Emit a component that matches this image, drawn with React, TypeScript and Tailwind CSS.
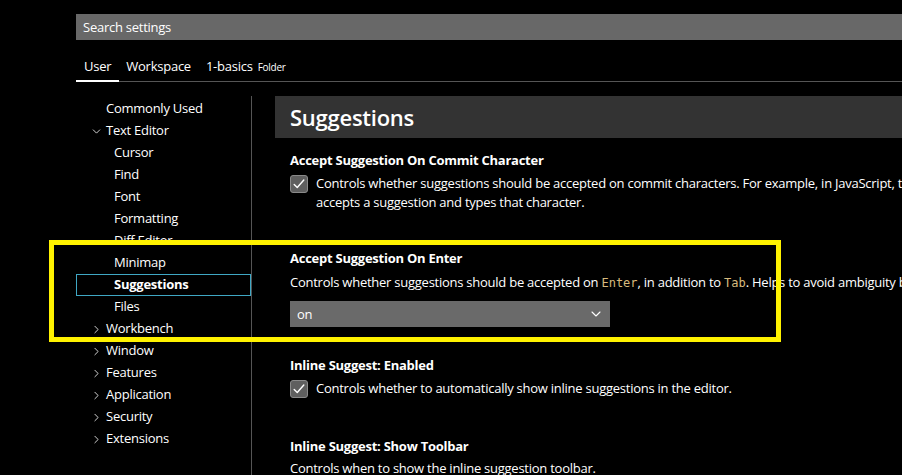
import { ChevronDown, ChevronRight } from "lucide-react";

const font = { fontFamily: '"Open Sans", "Noto Sans", sans-serif', letterSpacing: "-0.25px" };

type NavItem = { label: string; level: 0 | 1; chevron?: "down" | "right"; selected?: boolean };

const nav: NavItem[] = [
  { label: "Commonly Used", level: 0 },
  { label: "Text Editor", level: 0, chevron: "down" },
  { label: "Cursor", level: 1 },
  { label: "Find", level: 1 },
  { label: "Font", level: 1 },
  { label: "Formatting", level: 1 },
  { label: "Diff Editor", level: 1 },
  { label: "Minimap", level: 1 },
  { label: "Suggestions", level: 1, selected: true },
  { label: "Files", level: 1 },
  { label: "Workbench", level: 0, chevron: "right" },
  { label: "Window", level: 0, chevron: "right" },
  { label: "Features", level: 0, chevron: "right" },
  { label: "Application", level: 0, chevron: "right" },
  { label: "Security", level: 0, chevron: "right" },
  { label: "Extensions", level: 0, chevron: "right" },
];

function Checkbox() {
  return (
    <div className="mt-[1px] flex h-[18px] w-[18px] shrink-0 items-center justify-center rounded-[3px] border border-[#8a8a8a] bg-[#5f5f5f]">
      <svg width="14" height="14" viewBox="0 0 16 16" fill="none">
        <path d="M2.5 8.5l3.5 3.5 7.5-8.5" stroke="#fff" strokeWidth="1.6" strokeLinecap="round" strokeLinejoin="round" />
      </svg>
    </div>
  );
}

function Code({ children }: { children: string }) {
  return (
    <span className="text-[12px] tracking-normal text-[#d7ba7d]" style={{ fontFamily: '"DejaVu Sans Mono", monospace' }}>
      {children}
    </span>
  );
}

export default function App() {
  return (
    <div className="relative h-[475px] w-[902px] overflow-hidden bg-black text-[13px] text-[#e8e8e8]" style={font}>
      <div className="pl-[76px] pt-[14px]">
        <div className="flex h-[26px] items-center bg-[#686868] px-[7px] pt-[1px] text-white">Search settings</div>

        <div className="mt-[15px] flex h-[27px] items-start border-b border-[#555] leading-[22px]">
          <div className="-mb-px flex h-[27px] items-start border-b-2 border-white px-[8px] text-white">User</div>
          <div className="px-[7px] text-white">Workspace</div>
          <div className="flex items-baseline px-[8px] text-white">
            1-basics <span className="ml-[5px] text-[10px]">Folder</span>
          </div>
        </div>

        <div className="flex pt-[14px]">
          <div className="w-[176px] shrink-0 border-r border-[#555] pb-[40px] pt-[2px]">
            {nav.map((n) => (
              <div
                key={n.label}
                className={
                  "flex h-[22px] items-center text-white " +
                  (n.selected ? "border border-[#3fa7c4] font-bold" : "border border-transparent")
                }
                style={{ paddingLeft: n.level === 0 ? 13 : 37 }}
              >
                {n.level === 0 ? (
                  <span className="flex w-[16px] items-center">
                    {n.chevron === "down" && <ChevronDown size={13} strokeWidth={1.5} />}
                    {n.chevron === "right" && <ChevronRight size={13} strokeWidth={1.5} />}
                  </span>
                ) : null}
                <span>{n.label}</span>
              </div>
            ))}
          </div>

          <div className="ml-[23px] flex-1">
            <div className="flex h-[42px] items-center bg-[#333333] pl-[15px] text-[22px] font-semibold text-white">
              Suggestions
            </div>

            <div className="pl-[15px] leading-[18px]">
              <div className="mt-[13px] font-bold text-white">Accept Suggestion On Commit Character</div>
              <div className="mt-[5px] flex gap-[8px]">
                <Checkbox />
                <div className="whitespace-nowrap text-white">
                  Controls whether suggestions should be accepted on commit characters. For example, in JavaScript, the semi-colon (<Code>;</Code>) can be a commit character that
                  <br />
                  accepts a suggestion and types that character.
                </div>
              </div>

              <div className="mt-[38px] font-bold text-white">Accept Suggestion On Enter</div>
              <div className="mt-[6px] whitespace-nowrap text-white">
                Controls whether suggestions should be accepted on <Code>Enter</Code>, in addition to <Code>Tab</Code>. Helps to avoid ambiguity between inserting new lines or accepting suggestions.
              </div>
              <div className="mt-[9px] flex h-[26px] w-[320px] items-center justify-between bg-[#6a6a6a] pl-[7px] pr-[6px] text-white">
                <span>on</span>
                <ChevronDown size={16} strokeWidth={1.6} />
              </div>

              <div className="mt-[29px] font-bold text-white">Inline Suggest: Enabled</div>
              <div className="mt-[5px] flex gap-[8px]">
                <Checkbox />
                <div className="whitespace-nowrap text-white">Controls whether to automatically show inline suggestions in the editor.</div>
              </div>

              <div className="mt-[39px] font-bold text-white">Inline Suggest: Show Toolbar</div>
              <div className="mt-[4px] whitespace-nowrap text-white">Controls when to show the inline suggestion toolbar.</div>
            </div>
          </div>
        </div>
      </div>

      <div className="pointer-events-none absolute left-[49px] top-[240px] h-[102px] w-[732px] border-[5px] border-[#fff200]" />
    </div>
  );
}
